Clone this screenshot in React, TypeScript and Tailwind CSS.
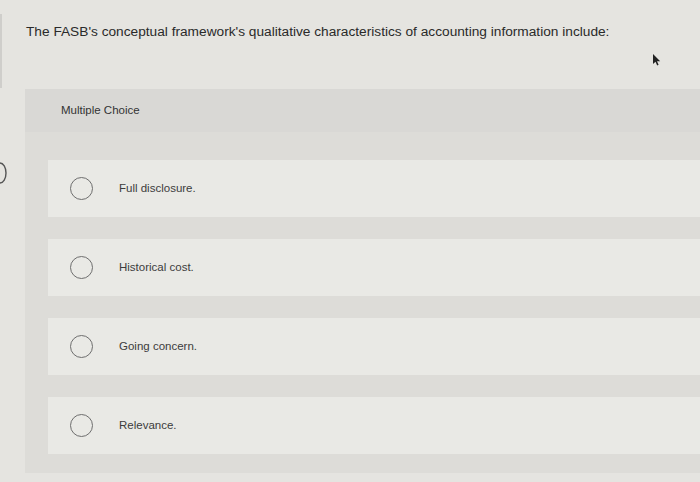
const choices = ['Full disclosure.', 'Historical cost.', 'Going concern.', 'Relevance.']

export default function App() {
  return (
    <div
      className="relative w-[700px] h-[482px] overflow-hidden bg-[#e5e4e0] text-[#333]"
      style={{ fontFamily: '"Liberation Sans", Arial, sans-serif' }}
    >
      {/* left pane edge */}
      <div className="absolute left-0 top-[14px] h-[74px] w-[2px] bg-[#cfcecb]" />
      <svg className="absolute left-0 top-[162px]" width="8" height="22" viewBox="0 0 8 22">
        <path d="M0 1 A6 10 0 0 1 0 21" fill="none" stroke="#555" strokeWidth="1.4" />
      </svg>

      {/* cursor */}
      <svg className="absolute left-[652px] top-[54px]" width="9" height="13" viewBox="0 0 9 13">
        <path d="M1 0 L1 10 L3.5 7.8 L5.2 11.5 L6.6 10.8 L5 7.3 L8.2 7.2 Z" fill="#222" />
      </svg>

      <p className="pl-[26px] pt-[22px] text-[13.7px] leading-[20px] text-[#2a2a2a]">
        The FASB's conceptual framework's qualitative characteristics of accounting information include:
      </p>

      <div className="ml-[25px] mt-[47px] bg-[#dddcd8]">
        <div className="flex h-[43px] items-center bg-[#d9d8d5] pl-[36px] text-[11.5px] text-[#333]">
          Multiple Choice
        </div>
        <div className="flex flex-col gap-[22px] pb-[19px] pl-[23px] pt-[28px]">
          {choices.map((c) => (
            <div key={c} className="flex h-[57px] items-center gap-[26px] bg-[#e9e9e5] pl-[22px]">
              <span className="h-[23px] w-[23px] rounded-full border-[1.5px] border-[#6e6e6e]" />
              <span className="text-[11.5px] text-[#3c3c3c]">{c}</span>
            </div>
          ))}
        </div>
      </div>
    </div>
  )
}
